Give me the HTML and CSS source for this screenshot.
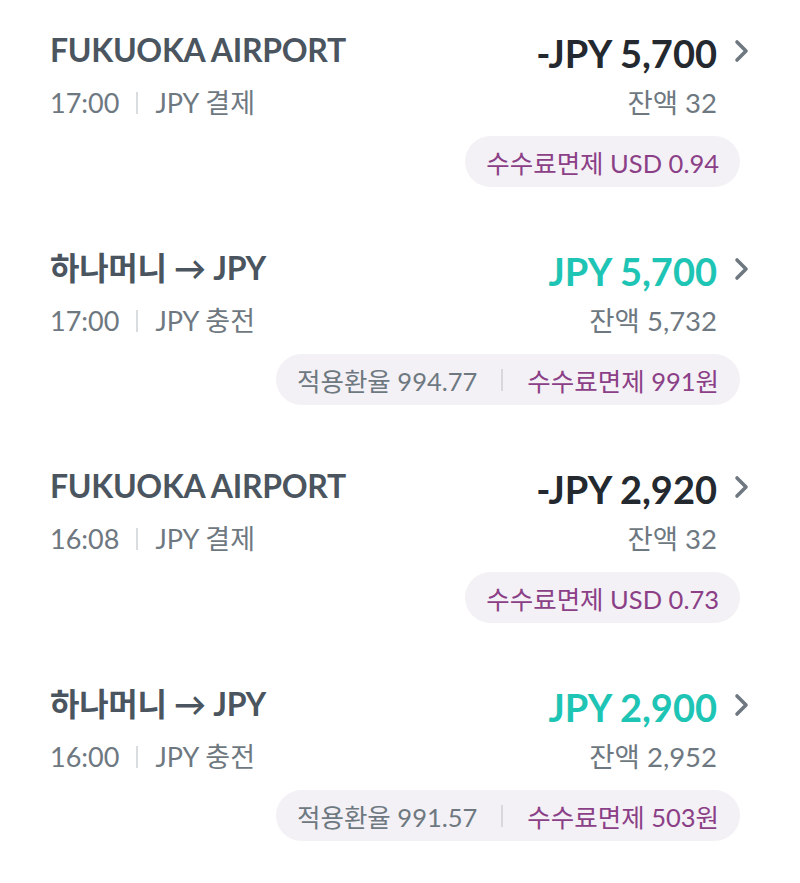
FILE: index.html
```html
<!DOCTYPE html>
<html lang="ko">
<head>
<meta charset="utf-8">
<link rel="stylesheet" href="styles.css">
</head>
<body>
<div class="list">
  <div class="txn">
    <div class="title">FUKUOKA AIRPORT</div>
    <div class="amount neg">-JPY 5,700</div>
    <svg class="chev" viewBox="0 0 16 24"><polyline points="3,3 12,12 3,21"/></svg>
    <div class="sub"><span>17:00</span><span class="sep"></span><span>JPY 결제</span></div>
    <div class="balance">잔액 32</div>
    <div class="pill"><span class="fee">수수료면제 USD 0.94</span></div>
  </div>
  <div class="txn">
    <div class="title">하나머니 → JPY</div>
    <div class="amount pos">JPY 5,700</div>
    <svg class="chev" viewBox="0 0 16 24"><polyline points="3,3 12,12 3,21"/></svg>
    <div class="sub"><span>17:00</span><span class="sep"></span><span>JPY 충전</span></div>
    <div class="balance">잔액 5,732</div>
    <div class="pill"><span class="rate">적용환율 994.77</span><span class="psep"></span><span class="fee">수수료면제 991원</span></div>
  </div>
  <div class="txn">
    <div class="title">FUKUOKA AIRPORT</div>
    <div class="amount neg">-JPY 2,920</div>
    <svg class="chev" viewBox="0 0 16 24"><polyline points="3,3 12,12 3,21"/></svg>
    <div class="sub"><span>16:08</span><span class="sep"></span><span>JPY 결제</span></div>
    <div class="balance">잔액 32</div>
    <div class="pill"><span class="fee">수수료면제 USD 0.73</span></div>
  </div>
  <div class="txn">
    <div class="title">하나머니 → JPY</div>
    <div class="amount pos">JPY 2,900</div>
    <svg class="chev" viewBox="0 0 16 24"><polyline points="3,3 12,12 3,21"/></svg>
    <div class="sub"><span>16:00</span><span class="sep"></span><span>JPY 충전</span></div>
    <div class="balance">잔액 2,952</div>
    <div class="pill"><span class="rate">적용환율 991.57</span><span class="psep"></span><span class="fee">수수료면제 503원</span></div>
  </div>
</div>
</body>
</html>
```

FILE: styles.css
```css
html, body {
  margin: 0;
  padding: 0;
  background: #ffffff;
}
body {
  font-family: Lato, "Noto Sans CJK KR", sans-serif;
  color: #4a5560;
}
.list {
  padding: 30px 50px 0 50px;
  display: flex;
  flex-direction: column;
  gap: 61px;
}
.txn {
  display: grid;
  grid-template-columns: 1fr auto 33px;
  grid-template-rows: 40px 36px 51px;
  row-gap: 15px;
  align-items: center;
}
.title {
  grid-column: 1;
  grid-row: 1;
  font-size: 32px;
  font-weight: 700;
  line-height: 40px;
  color: #4a5560;
  letter-spacing: -0.3px;
}
.amount {
  grid-column: 2;
  grid-row: 1;
  font-size: 38px;
  font-weight: 700;
  line-height: 40px;
  text-align: right;
  margin-top: 5px;
}
.amount.neg { color: #23292e; }
.amount.pos { color: #1ec4b4; }
.chev {
  grid-column: 3;
  grid-row: 1;
  justify-self: end;
  width: 16px;
  height: 24px;
  fill: none;
  stroke: #6f7880;
  stroke-width: 3.6;
  stroke-linecap: round;
  stroke-linejoin: round;
  margin-top: 2px;
}
.sub {
  grid-column: 1;
  grid-row: 2;
  display: flex;
  align-items: center;
  gap: 17px;
  font-size: 27px;
  line-height: 36px;
  color: #6e7881;
}
.sep {
  width: 2px;
  height: 22px;
  background: #dadde0;
}
.balance {
  grid-column: 2;
  grid-row: 2;
  text-align: right;
  font-size: 27.5px;
  line-height: 36px;
  color: #6e7881;
}
.pill {
  grid-column: 1 / 4;
  grid-row: 3;
  justify-self: end;
  margin-right: 10px;
  height: 51px;
  box-sizing: border-box;
  padding: 0 21px;
  border-radius: 26px;
  background: #f3f1f5;
  display: flex;
  align-items: center;
  gap: 24px;
  font-size: 25.5px;
  white-space: nowrap;
}
.rate { color: #6e7881; }
.fee { color: #8b3f87; }
.psep {
  width: 2px;
  height: 22px;
  background: #d8d8dc;
}
```
